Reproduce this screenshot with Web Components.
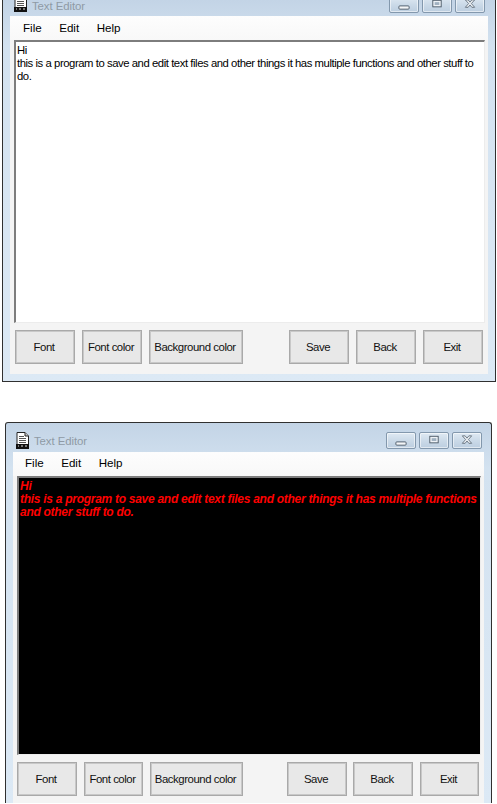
<!DOCTYPE html>
<html>
<head>
<meta charset="utf-8">
<title>Text Editor</title>
<style>
  html, body { margin: 0; padding: 0; background: #fff; overflow: hidden; }
  body { width: 497px; height: 804px; font-family: "Liberation Sans", Arial, sans-serif; }
  .first { margin-left: 2px; width: 494px; height: 382px; }
  .second { margin-left: 5px; margin-top: 40px; width: 487px; height: 381px; }
</style>
</head>
<body>
<editor-window class="first" clipped>
  <win-button width="60">Font</win-button>
  <win-button width="60" gap="7">Font color</win-button>
  <win-button width="94" gap="7">Background color</win-button>
  <win-button width="60" gap="46">Save</win-button>
  <win-button width="60" gap="7">Back</win-button>
  <win-button width="60" gap="7">Exit</win-button>
</editor-window>
<editor-window class="second" dark>
  <win-button width="60">Font</win-button>
  <win-button width="59" gap="7">Font color</win-button>
  <win-button width="93" gap="7">Background color</win-button>
  <win-button width="60" gap="44">Save</win-button>
  <win-button width="60" gap="6">Back</win-button>
  <win-button width="59" gap="7">Exit</win-button>
</editor-window>

<script>
class CaptionButton extends HTMLElement {
  connectedCallback() {
    const kind = this.getAttribute("kind");
    const glyphs = {
      min: `<rect x="9.5" y="9.5" width="11" height="3.5" rx="1" fill="#f4f6f8" stroke="#4c5a68"/>`,
      max: `<rect x="10.5" y="3.5" width="9" height="7" fill="#eef2f6" stroke="#4c5a68"/><rect x="12.5" y="5.5" width="5" height="3" fill="#9fb0c0"/>`,
      close: `<path d="M10 3l3 0 2 2.5 2-2.5 3 0-3.5 4 3.5 4-3 0-2-2.5-2 2.5-3 0 3.5-4z" fill="#eef2f6" stroke="#4c5a68" stroke-width=".8"/>`,
    };
    this.attachShadow({ mode: "open" });
    this.shadowRoot.innerHTML = `
      <style>
        :host {
          display: block;
          width: 30px;
          height: 17px;
          box-sizing: border-box;
          border: 1px solid #8398ad;
          border-radius: 2px;
          background: linear-gradient(#dfe9f3, #cbdae8 50%, #bccee0);
          box-shadow: inset 0 0 0 1px rgba(255,255,255,.55);
        }
        svg { display: block; width: 28px; height: 15px; }
      </style>
      <svg viewBox="0 0 30 16">${glyphs[kind] || ""}</svg>
    `;
  }
}

class WinButton extends HTMLElement {
  connectedCallback() {
    const width = this.getAttribute("width") || 60;
    const gap = this.getAttribute("gap") || 0;
    this.attachShadow({ mode: "open" });
    this.shadowRoot.innerHTML = `
      <style>
        :host {
          display: flex;
          align-items: center;
          justify-content: center;
          box-sizing: border-box;
          flex: none;
          width: ${width}px;
          height: 34px;
          margin-left: ${gap}px;
          padding-right: 2px;
          border: 1px solid #a9a9a9;
          box-shadow: inset 0 0 0 1px #c8c8c8;
          background: #e8e8e8;
          color: #111;
          font: 11.4px "Liberation Sans", Arial, sans-serif;
          letter-spacing: -0.45px;
          white-space: nowrap;
        }
      </style>
      <slot></slot>
    `;
  }
}

class EditorWindow extends HTMLElement {
  connectedCallback() {
    const dark = this.hasAttribute("dark");
    const clipped = this.hasAttribute("clipped");
    const text = "this is a program to save and edit text files and other things it has multiple functions and other stuff to do.";
    this.attachShadow({ mode: "open" });
    this.shadowRoot.innerHTML = `
      <style>
        :host {
          display: block;
          box-sizing: border-box;
          overflow: hidden;
          background: linear-gradient(#c3d4e6, #d3e2f0 12%, #dce9f5);
          border: 1px solid #303030;
          border-top: ${clipped ? "0" : "1px solid #303030"};
          border-bottom: ${clipped ? "1px solid #303030" : "0"};
          border-radius: ${clipped ? "0" : "3px 3px 0 0"};
          padding: 0 7px ${clipped ? 7 : 0}px 7px;
          color: #000;
          font: 12px "Liberation Sans", Arial, sans-serif;
        }
        .title {
          display: flex;
          box-sizing: border-box;
          height: ${clipped ? 16 : 29}px;
          align-items: ${clipped ? "flex-end" : "center"};
          overflow: hidden;
          padding: ${clipped ? 0 : 6}px ${clipped ? 3 : 2}px 0 ${clipped ? 4 : 3}px;
        }
        .title svg { flex: none; width: 13px; height: 17px; margin-bottom: ${clipped ? 4 : 0}px; }
        .name {
          margin-left: 5px;
          color: #8f9aa5;
          font-size: 11.4px;
          letter-spacing: -0.08px;
          margin-bottom: ${clipped ? 4 : 0}px;
        }
        .caps {
          margin-left: auto;
          display: flex;
          gap: 3px;
          margin-bottom: ${clipped ? 3 : 0}px;
        }
        .client {
          display: flex;
          flex-direction: column;
          height: ${clipped ? 358 : 351}px;
          background: #f4f4f4;
        }
        .menu {
          display: flex;
          box-sizing: border-box;
          flex: none;
          height: 24px;
          align-items: center;
          gap: 17.5px;
          padding: 0 0 ${clipped ? 2 : 4}px ${clipped ? 13 : 12}px;
          background: linear-gradient(#fdfdfd, #f8f8f8);
          font-size: 11.6px;
        }
        .editor {
          box-sizing: border-box;
          flex: none;
          height: ${clipped ? 283 : 279}px;
          margin: 0 3px 0 4px;
          padding: 2px ${clipped ? 4 : 0}px 0 1px;
          border-style: solid;
          border-width: 2px 1px 1px 2px;
          border-color: #7d7d7d #ececec #ececec #7d7d7d;
          background: ${dark ? "#000" : "#fff"};
          color: ${dark ? "#f00" : "#000"};
          font: ${dark ? "italic bold" : "normal"} ${dark ? "12px" : "11.3px"}/13px "Liberation Sans", Arial, sans-serif;
          letter-spacing: ${dark ? "-0.28px" : "-0.44px"};
        }
        .actions {
          display: flex;
          flex: none;
          margin-top: 7px;
          padding-left: ${clipped ? 5 : 4}px;
        }
      </style>
      <div class="title">
        <svg viewBox="0 0 13 17" aria-hidden="true">
          <path d="M1 .5h8l3.5 3.5v12.5H1z" fill="#fff" stroke="#222"/>
          <path d="M9 .5V4h3.5" fill="#ccc" stroke="#222"/>
          <path d="M3 4.5h5M3 6.5h7M3 8.5h7M3 10.5h7" stroke="#555"/>
          <rect x="0" y="12" width="13" height="5" fill="#111"/>
          <path d="M2 14h1M5 14h2M9 14h2" stroke="#ddd"/>
        </svg>
        <span class="name">Text Editor</span>
        <div class="caps">
          <caption-button kind="min"></caption-button>
          <caption-button kind="max"></caption-button>
          <caption-button kind="close"></caption-button>
        </div>
      </div>
      <div class="client">
        <div class="menu"><span>File</span><span>Edit</span><span>Help</span></div>
        <div class="editor">Hi<br>${text}</div>
        <div class="actions"><slot></slot></div>
      </div>
    `;
  }
}

customElements.define("caption-button", CaptionButton);
customElements.define("win-button", WinButton);
customElements.define("editor-window", EditorWindow);
</script>
</body>
</html>
